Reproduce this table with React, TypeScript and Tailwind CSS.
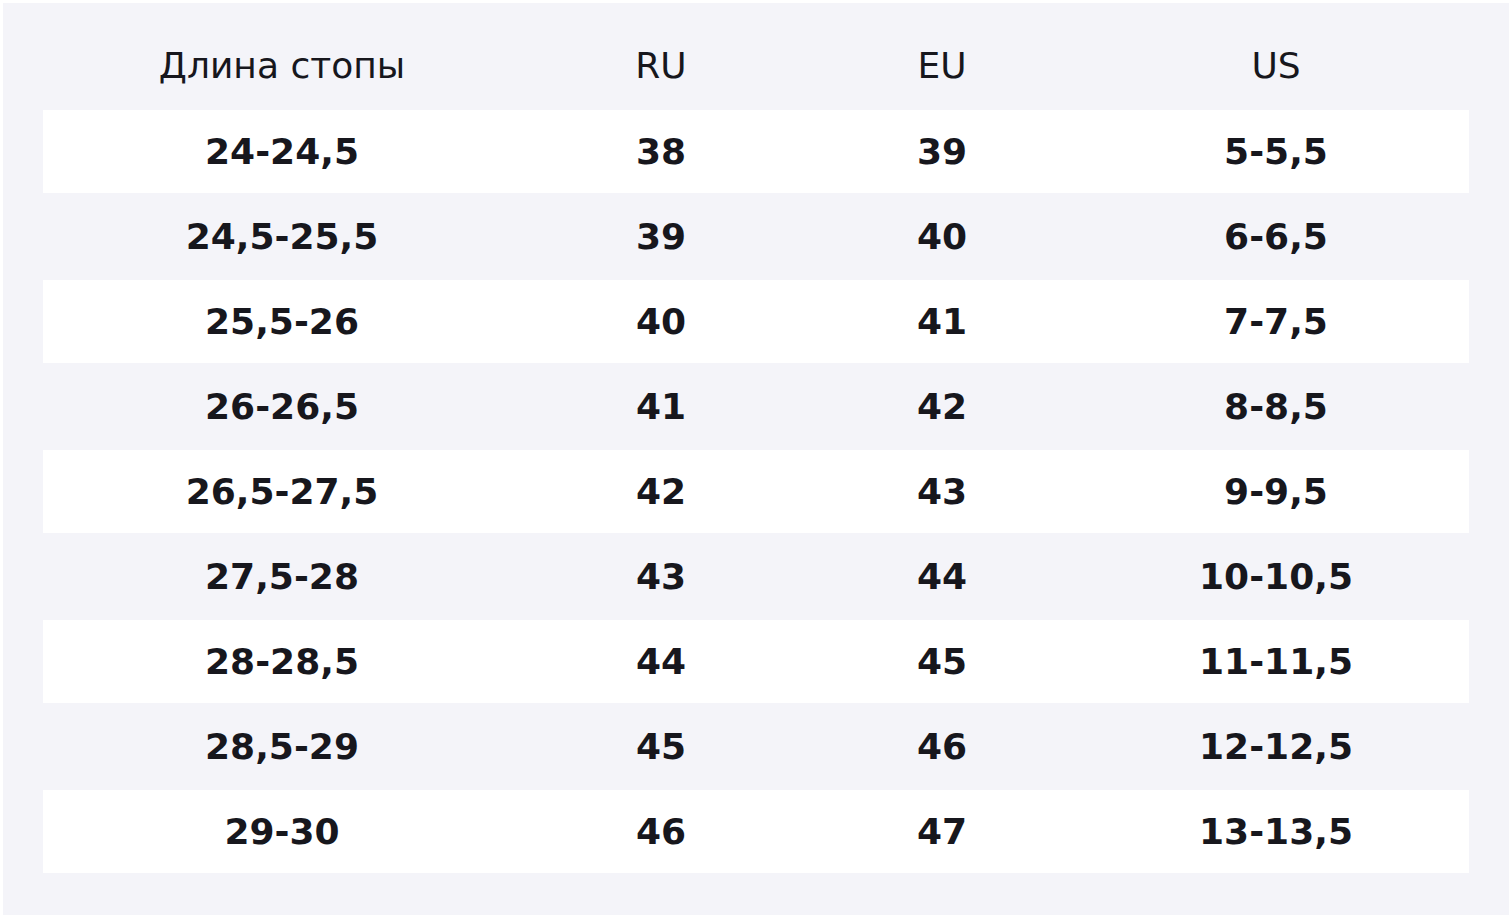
const rows: [string, string, string, string][] = [
  ["24-24,5", "38", "39", "5-5,5"],
  ["24,5-25,5", "39", "40", "6-6,5"],
  ["25,5-26", "40", "41", "7-7,5"],
  ["26-26,5", "41", "42", "8-8,5"],
  ["26,5-27,5", "42", "43", "9-9,5"],
  ["27,5-28", "43", "44", "10-10,5"],
  ["28-28,5", "44", "45", "11-11,5"],
  ["28,5-29", "45", "46", "12-12,5"],
  ["29-30", "46", "47", "13-13,5"],
];

const headers = ["Длина стопы", "RU", "EU", "US"];

const cols = "grid grid-cols-[478px_280px_282px_386px]";

export default function App() {
  return (
    <div className="w-[1512px] h-[918px] bg-white p-[3px] font-['DejaVu_Sans',sans-serif] text-[#17171d]">
      <div className="h-full bg-[#f4f4f9] p-10">
        {/* Header */}
        <div className={`${cols} h-[67px] items-start pt-[2px]`}>
          {headers.map((h) => (
            <div key={h} className="text-center text-[36px] leading-[42px]">
              {h}
            </div>
          ))}
        </div>

        {/* Body */}
        {rows.map((r, i) => (
          <div
            key={i}
            className={`${cols} h-[85px] items-center border-b-2 border-[#f4f4f9] ${
              i % 2 === 0 ? "bg-white" : "bg-[#f4f4f9]"
            }`}
          >
            {r.map((c, j) => (
              <div key={j} className="text-center text-[36px] leading-[42px] font-bold">
                {c}
              </div>
            ))}
          </div>
        ))}
      </div>
    </div>
  );
}
